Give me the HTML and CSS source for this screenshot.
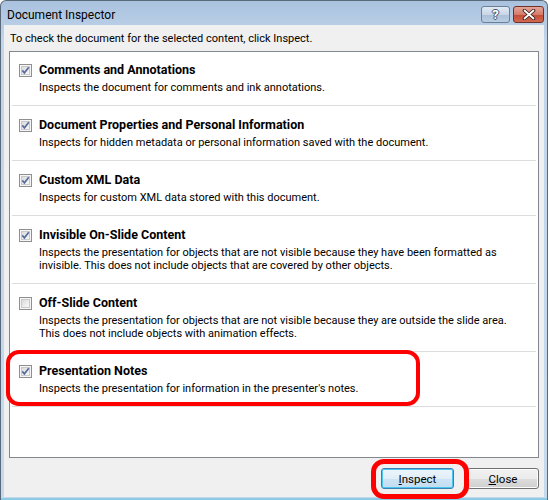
FILE: index.html
```html
<!DOCTYPE html>
<html lang="en">
  <head>
    <meta charset="UTF-8" />
    <title>Document Inspector</title>
    <link rel="stylesheet" href="styles.css">
  </head>
  <body>
    <svg width="0" height="0" style="position:absolute">
      <defs>
        <linearGradient id="boxFill" x1="0" y1="0" x2="1" y2="1">
          <stop offset="0" stop-color="#d9d9d9" />
          <stop offset="1" stop-color="#fbfbfb" />
        </linearGradient>
        <symbol id="checkbox" viewBox="0 0 13 13">
          <rect x="0.5" y="0.5" width="12" height="12" fill="#f6f6f6" stroke="#8f8f8f" />
          <rect x="2.5" y="2.5" width="8" height="8" fill="url(#boxFill)" stroke="#c9c9c9" />
        </symbol>
        <symbol id="checkmark" viewBox="0 0 13 13">
          <path d="M3.3 6.4 L5.4 8.8 L9.8 3.2" fill="none" stroke="#5a6c9e" stroke-width="1.7" />
        </symbol>
      </defs>
    </svg>

    <div class="window">
      <div class="titlebar">
        <span class="title">Document Inspector</span>
        <div class="caption-buttons">
          <span class="cap-btn help">?</span>
          <span class="cap-btn close">
            <svg width="14" height="11" viewBox="0 0 14 11">
              <path d="M2.5 1.5 L11.5 9.5 M11.5 1.5 L2.5 9.5" stroke="#3b1f1c" stroke-width="3.6" stroke-linecap="round" />
              <path d="M2.5 1.5 L11.5 9.5 M11.5 1.5 L2.5 9.5" stroke="#ffffff" stroke-width="1.8" stroke-linecap="round" />
            </svg>
          </span>
        </div>
      </div>

      <div class="client">
        <p class="intro">To check the document for the selected content, click Inspect.</p>

        <div class="list">
          <div class="item">
            <svg class="check"><use href="#checkbox" /><use href="#checkmark" /></svg>
            <div class="item-title">Comments and Annotations</div>
            <div class="item-desc">Inspects the document for comments and ink annotations.</div>
          </div>
          <div class="item">
            <svg class="check"><use href="#checkbox" /><use href="#checkmark" /></svg>
            <div class="item-title">Document Properties and Personal Information</div>
            <div class="item-desc">Inspects for hidden metadata or personal information saved with the document.</div>
          </div>
          <div class="item">
            <svg class="check"><use href="#checkbox" /><use href="#checkmark" /></svg>
            <div class="item-title">Custom XML Data</div>
            <div class="item-desc">Inspects for custom XML data stored with this document.</div>
          </div>
          <div class="item">
            <svg class="check"><use href="#checkbox" /><use href="#checkmark" /></svg>
            <div class="item-title">Invisible On-Slide Content</div>
            <div class="item-desc">Inspects the presentation for objects that are not visible because they have been formatted as<br>invisible. This does not include objects that are covered by other objects.</div>
          </div>
          <div class="item">
            <svg class="check"><use href="#checkbox" /></svg>
            <div class="item-title">Off-Slide Content</div>
            <div class="item-desc">Inspects the presentation for objects that are not visible because they are outside the slide area.<br>This does not include objects with animation effects.</div>
          </div>
          <div class="item">
            <svg class="check"><use href="#checkbox" /><use href="#checkmark" /></svg>
            <div class="item-title">Presentation Notes</div>
            <div class="item-desc">Inspects the presentation for information in the presenter's notes.</div>
          </div>
        </div>

        <div class="footer">
          <button class="btn default"><u>I</u>nspect</button>
          <button class="btn"><u>C</u>lose</button>
        </div>
      </div>

      <!-- red highlight marks drawn over the dialog -->
      <div class="mark mark-notes"></div>
      <div class="mark mark-inspect"></div>
    </div>
  </body>
</html>
```

FILE: styles.css
```css
body {
  margin: 0;
  background: #ffffff;
  font-family: Roboto, "Liberation Sans", sans-serif;
  font-size: 11px;
  color: #000;
}

.window {
  position: relative;
  width: 548px;
  height: 500px;
  border: 1px solid #5b6a7a;
  border-bottom: none;
  border-radius: 6px 6px 0 0;
  background: linear-gradient(#a9c2de, #c2d6eb 40px, #c6daee);
  padding: 0 3px 3px 3px;
  box-sizing: border-box;
  display: flex;
  flex-direction: column;
  box-shadow: inset 0 -2px 0 #8ccbe6;
}

.titlebar {
  height: 24px;
  display: flex;
  align-items: flex-start;
  justify-content: space-between;
}

.title {
  margin: 6px 0 0 3px;
  font-size: 12px;
  line-height: 16px;
}

.caption-buttons {
  display: flex;
  gap: 3px;
  margin-top: 5px;
}

.cap-btn {
  height: 15px;
  border-radius: 3px;
  display: flex;
  align-items: center;
  justify-content: center;
  box-sizing: content-box;
}

.help {
  width: 27px;
  border: 1px solid #6c7f98;
  background: linear-gradient(#e2eaf4, #c8d6e7 50%, #abbfd8 51%, #b9cde3);
  color: #fff;
  font-weight: bold;
  font-size: 13px;
  line-height: 15px;
  text-shadow: 1px 0 0 #44556c, -1px 0 0 #44556c, 0 1px 0 #44556c, 0 -1px 0 #44556c;
}

.close {
  width: 29px;
  border: 1px solid #6e3128;
  background: linear-gradient(#e5a597, #d57b6b 50%, #c44a35 51%, #d06a52);
}

.client {
  flex: 1;
  background: #f0f0f0;
  padding: 0 5px;
  display: flex;
  flex-direction: column;
}

.intro {
  margin: 7px 0 5px 1px;
  line-height: 14px;
  white-space: nowrap;
}

.list {
  height: 405px;
  border: 1px solid #828790;
  background: #fff;
}

.item {
  margin: 0 2px;
  padding: 11px 7px 11px 7px;
  border-bottom: 1px solid #dcdcdc;
  display: grid;
  grid-template-columns: 13px 1fr;
  column-gap: 7px;
}

.item:first-child {
  padding-top: 10px;
}

.check {
  width: 13px;
  height: 13px;
  margin-top: 2px;
}

.item-title {
  font-weight: bold;
  font-size: 12.5px;
  line-height: 16px;
  white-space: nowrap;
}

.item-desc {
  grid-column: 2;
  margin-top: 3px;
  line-height: 13px;
  white-space: nowrap;
}

.footer {
  display: flex;
  justify-content: flex-end;
  gap: 13px;
  margin-top: 10px;
}

.btn {
  height: 21px;
  width: 72px;
  padding: 0;
  font-family: inherit;
  font-size: 11.5px;
  color: #000;
  border: 1px solid #707070;
  border-radius: 3px;
  background: linear-gradient(#f2f2f2, #ebebeb 50%, #dddddd 51%, #cfcfcf);
  box-shadow: inset 0 0 0 1px #fcfcfc;
}

.btn.default {
  width: 73px;
  border-color: #3c7fb1;
  background: linear-gradient(#ecf5fb, #e1eef8 50%, #cde4f5 51%, #c3dcf0);
  box-shadow: inset 0 0 0 1px #48c5f1;
}

.mark {
  position: absolute;
  border: 4px solid #ff0000;
  border-radius: 13px;
  box-sizing: border-box;
}

.mark-notes {
  left: 5px;
  top: 349px;
  width: 414px;
  height: 56px;
}

.mark-inspect {
  left: 370px;
  top: 458px;
  width: 98px;
  height: 40px;
  border-width: 5px;
}
```
